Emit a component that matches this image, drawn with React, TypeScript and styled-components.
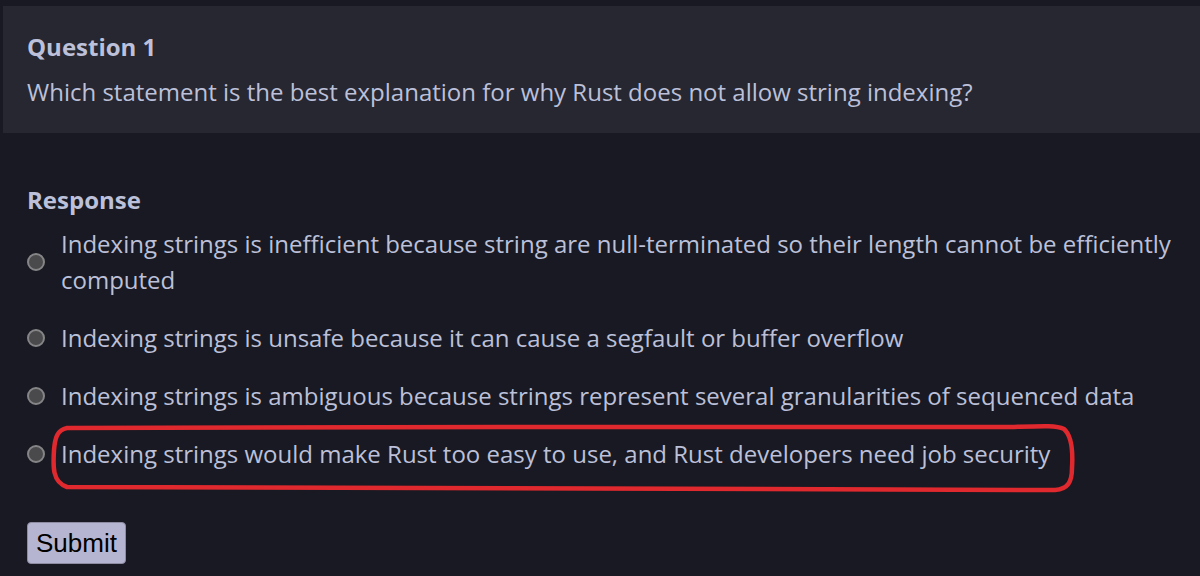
import styled, { createGlobalStyle } from "styled-components"

const GlobalStyle = createGlobalStyle`
    html, body {
        margin: 0;
        padding: 0;
        background: #181922;
        font-family: "Open Sans", "Noto Sans", sans-serif;
        color: #bcc0d9;
    }
`

const Page = styled.div`
    width: 1200px;
    height: 576px;
    overflow: hidden;
    padding: 6px 0 0 3px;
    box-sizing: border-box;
`
const QuestionBox = styled.section`
    background: #262731;
    padding: 24px 24px 0;
    height: 127px;
    box-sizing: border-box;
`
const Title = styled.h2`
    margin: 0;
    font-size: 24px;
    font-weight: 700;
    line-height: 34px;
`
const Prompt = styled.p`
    margin: 10px 0 0;
    font-size: 24px;
    line-height: 36px;
`
const Answer = styled.form`
    padding: 50px 24px 0;
`
const Heading = styled.h3`
    margin: 0 0 9px;
    font-size: 24px;
    font-weight: 700;
    line-height: 34px;
`
const Options = styled.div`
    display: flex;
    flex-direction: column;
    gap: 22px;
`
const Option = styled.label`
    display: flex;
    align-items: center;
    gap: 16px;
    font-size: 24px;
    line-height: 36px;
`
const Radio = styled.span`
    flex: none;
    width: 18px;
    height: 18px;
    border-radius: 50%;
    background: #4a4a4c;
    border: 2px solid #858587;
    box-sizing: border-box;
`
const Text = styled.span`
    position: relative;
`
const Circled = styled.svg`
    position: absolute;
    left: -10px;
    top: -12px;
    width: 1026px;
    height: 68px;
    pointer-events: none;
    overflow: visible;
`
const Submit = styled.button`
    display: block;
    margin-top: 50px;
    font-family: "Liberation Sans", Arial, sans-serif;
    font-size: 26px;
    padding: 0 8px;
    width: 99px;
    height: 42px;
    background: #b6b5d1;
    color: #000;
    border: 1px solid #8d8ca3;
    border-radius: 4px;
`

const options = [
    "Indexing strings is inefficient because string are null-terminated so their length cannot be efficiently computed",
    "Indexing strings is unsafe because it can cause a segfault or buffer overflow",
    "Indexing strings is ambiguous because strings represent several granularities of sequenced data",
    "Indexing strings would make Rust too easy to use, and Rust developers need job security",
]

const App = () => {
    return (
        <Page>
            <GlobalStyle />
            <QuestionBox>
                <Title>Question 1</Title>
                <Prompt>Which statement is the best explanation for why Rust does not allow string indexing?</Prompt>
            </QuestionBox>
            <Answer onSubmit={e => e.preventDefault()}>
                <Heading>Response</Heading>
                <Options>
                    {options.map((text, i) => (
                        <Option key={i}>
                            <Radio />
                            <Text>
                                {text}
                                {i === 3 && (
                                    <Circled viewBox="0 0 1026 68">
                                        <path
                                            d="M16 4 C 6 6, 4 14, 3 26 C 2 42, 1 58, 16 63 C 200 66, 600 64, 1004 66 C 1017 65, 1021 58, 1021 44 C 1022 28, 1021 12, 1013 5 C 1005 1, 990 2, 960 3 C 700 4, 300 2, 16 4 Z"
                                            fill="none"
                                            stroke="#e0292e"
                                            strokeWidth="4.5"
                                            strokeLinejoin="round"
                                        />
                                    </Circled>
                                )}
                            </Text>
                        </Option>
                    ))}
                </Options>
                <Submit type="submit">Submit</Submit>
            </Answer>
        </Page>
    )
}

export default App
